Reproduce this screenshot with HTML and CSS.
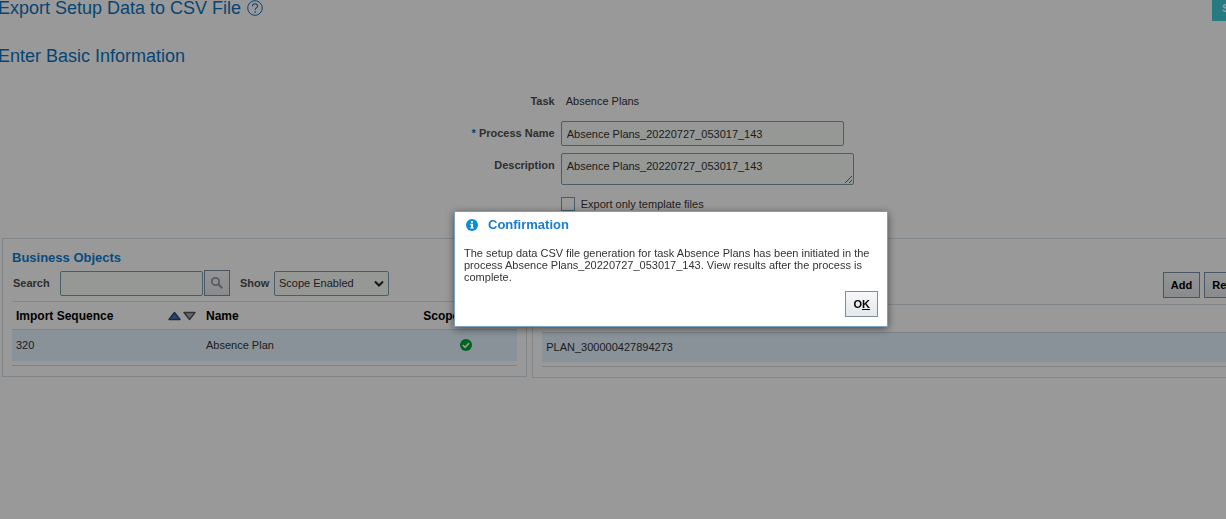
FILE: index.html
```
<!DOCTYPE html>
<html lang="en">
<head>
  <meta charset="UTF-8">
  <meta name="viewport" content="width=device-width, initial-scale=1.0">
  <title>Export Setup Data to CSV File</title>
  <link rel="stylesheet" href="styles.css">
</head>
<body>
  <div class="page">
    <div class="header">
      <h1>Export Setup Data to CSV File</h1>
      <a class="help" href="#" aria-label="Help">
        <svg width="16" height="16" viewBox="0 0 16 16" fill="none" stroke="currentColor">
          <circle cx="8" cy="8" r="7.3"/>
          <path d="M5.4 6.2C5.4 4.6 6.5 3.7 8 3.7s2.6.9 2.6 2.3c0 1.8-2.5 2-2.5 3.9" stroke-width="1.1"/>
          <path d="M8.1 11.3v1.4" stroke-width="1.3"/>
        </svg>
      </a>
      <button class="submit" type="button">Submit</button>
    </div>

    <h2>Enter Basic Information</h2>

    <form class="form">
      <span class="label">Task</span>
      <span class="value">Absence Plans</span>
      <label class="label" for="process"><span class="required">*</span> Process Name</label>
      <input class="field" id="process" type="text" value="Absence Plans_20220727_053017_143">
      <label class="label" for="description">Description</label>
      <textarea class="field" id="description">Absence Plans_20220727_053017_143</textarea>
      <div class="check">
        <input id="template" type="checkbox">
        <label for="template">Export only template files</label>
      </div>
    </form>

    <div class="panels">
      <div class="panel">
        <h3>Business Objects</h3>
        <div class="toolbar">
          <label for="search">Search</label>
          <input class="field search" id="search" type="text">
          <button class="btn icon-btn" type="button" aria-label="Search">
            <svg width="14" height="14" viewBox="0 0 14 14" fill="none" stroke="#999">
              <circle cx="5.5" cy="5.5" r="3.7" stroke-width="1.8"/>
              <path d="M8.3 8.3l4 4" stroke-width="2.2"/>
            </svg>
          </button>
          <label class="show" for="show">Show</label>
          <div class="select">
            <select class="field" id="show">
              <option>Scope Enabled</option>
            </select>
            <svg width="10" height="8" viewBox="0 0 10 8" fill="none" stroke="#222" stroke-width="2">
              <path d="M1 1.5l4 4 4-4"/>
            </svg>
          </div>
        </div>
        <table>
          <thead>
            <tr>
              <th class="col-seq">
                <div class="sortable">
                  Import Sequence
                  <svg width="28" height="10" viewBox="0 0 28 10" stroke-linejoin="round">
                    <path d="M1 8.5h11L6.5 1.5z" fill="#4a6fc4" stroke="#38435c" stroke-width="1.4"/>
                    <path d="M16 1.5h11l-5.5 7z" fill="#a4acb0" stroke="#555" stroke-width="1.4"/>
                  </svg>
                </div>
              </th>
              <th class="col-name">Name</th>
              <th class="col-scope">Scope Enabled</th>
            </tr>
          </thead>
          <tbody>
            <tr>
              <td>320</td>
              <td>Absence Plan</td>
              <td class="col-scope">
                <svg width="12" height="12" viewBox="0 0 12 12">
                  <circle cx="6" cy="6" r="6" fill="#00a830"/>
                  <path d="M2.8 6l2.3 2.3 4-4.2" fill="none" stroke="#fff" stroke-width="1.7"/>
                </svg>
              </td>
            </tr>
          </tbody>
        </table>
      </div>

      <div class="panel scope-panel">
        <div class="toolbar actions">
          <button class="btn" type="button">Add</button>
          <button class="btn" type="button">Remove</button>
        </div>
        <table>
          <thead>
            <tr><th></th></tr>
          </thead>
          <tbody>
            <tr><td>PLAN_300000427894273</td></tr>
          </tbody>
        </table>
      </div>
    </div>
  </div>

  <div class="overlay">
    <div class="dialog" role="dialog" aria-labelledby="dialog-title">
      <div class="dialog-title">
        <svg width="12" height="12" viewBox="0 0 12 12">
          <circle cx="6" cy="6" r="6" fill="#0a8fd6"/>
          <path d="M5 2h2v1.8H5zM4.3 4.8H7v3.6h.8v1.1H4.2V8.4H5V5.9h-.7z" fill="#fff"/>
        </svg>
        <h4 id="dialog-title">Confirmation</h4>
      </div>
      <p>The setup data CSV file generation for task Absence Plans has been initiated in the process Absence Plans_20220727_053017_143. View results after the process is complete.</p>
      <div class="dialog-footer">
        <button class="btn" type="button">O<u>K</u></button>
      </div>
    </div>
  </div>
</body>
</html>
```

FILE: styles.css
```
* {
  box-sizing: border-box;
}
body {
  margin: 0;
  min-height: 100vh;
  overflow: hidden;
  background-color: #fff;
  color: #333;
  font-family: "Liberation Sans", Arial, sans-serif;
  font-size: 11px;
}
h1, h2, h3, h4, p {
  margin: 0;
}
input, textarea, select, button {
  font-family: inherit;
  font-size: 11px;
  margin: 0;
}

/* the page is wider than the window and runs off both sides */
.page {
  margin: -5px -128px 0 -12px;
  padding-left: 10px;
}
.header {
  display: flex;
  align-items: center;
  gap: 6px;
  height: 26px;
  padding-right: 70px;
}
h1, h2 {
  color: #0b74bf;
  font-size: 18px;
  font-weight: normal;
  line-height: 24px;
}
h2 {
  margin-top: 23px;
}
.help {
  display: flex;
  color: #0b74bf;
}
.submit {
  height: 26px;
  width: 72px;
  margin-left: auto;
  padding: 0 10px;
  border: 0;
  background-color: #41cbd4;
  color: #fff;
  font-weight: bold;
  text-align: left;
}

.form {
  display: grid;
  grid-template-columns: 41.5% 1fr;
  gap: 7px 0;
  align-items: center;
  justify-items: start;
  margin-top: 21px;
}
.label {
  justify-self: end;
  align-self: start;
  padding-right: 6px;
  color: #4f4f4f;
  font-weight: bold;
  line-height: 25px;
}
.required {
  color: #0572ce;
}
.value {
  padding-left: 5px;
  line-height: 25px;
}
.field {
  height: 25px;
  padding: 0 5px;
  border: 1px solid #7a9eae;
  border-radius: 2px;
  background-color: #fafdfb;
  color: #333;
  outline: none;
}
#process {
  width: 283px;
}
#description {
  display: block;
  width: 293px;
  height: 32px;
  padding-top: 6px;
  overflow: hidden;
}
.check {
  grid-column: 2;
  display: flex;
  align-items: center;
  gap: 6px;
  height: 24px;
}
.check input {
  appearance: none;
  width: 14px;
  height: 14px;
  border: 1px solid #7a9eae;
}

.panels {
  display: grid;
  grid-template-columns: 39.2% 1fr;
  gap: 5px;
  align-items: start;
  margin: 22px 12px 0 4px;
}
.panel {
  padding: 10px 9px;
  border: 1px solid #d6dfe6;
}
h3 {
  color: #0c7fd4;
  font-size: 13px;
  line-height: 18px;
}
.toolbar {
  display: flex;
  align-items: center;
  height: 26px;
  margin: 3px 0 5px;
}
.toolbar label {
  width: 48px;
  padding-left: 1px;
  color: #4f4f4f;
  font-weight: bold;
}
.toolbar .show {
  width: 44px;
  padding-left: 10px;
}
.search {
  width: 143px;
}
.btn {
  height: 26px;
  padding: 0 7px;
  border: 1px solid #7a8fa3;
  background: linear-gradient(#f6f8f9, #e4e8ea);
  color: #000;
  font-weight: bold;
}
.icon-btn {
  display: flex;
  align-items: center;
  justify-content: center;
  width: 26px;
  margin-left: 1px;
  padding: 0;
}
.select {
  position: relative;
}
.select select {
  appearance: none;
  width: 115px;
  padding: 0 4px;
}
.select svg {
  position: absolute;
  top: 9px;
  right: 5px;
  pointer-events: none;
}

table {
  width: 100%;
  border-collapse: collapse;
  border-top: 1px solid #d6dfe6;
}
th, td {
  padding: 0 4px;
  text-align: left;
}
th {
  height: 28px;
  color: #000;
  font-size: 12px;
}
td {
  height: 31px;
  border-top: 1px solid #d0dce4;
  background-color: #e4f3ff;
}
.panel table {
  margin-bottom: 4px;
}
.panel::after {
  content: "";
  display: block;
  border-top: 1px solid #d6d9dc;
}
.sortable {
  display: flex;
  align-items: center;
  justify-content: space-between;
  padding-right: 2px;
}
.col-seq {
  width: 190px;
}
.col-scope {
  width: 102px;
  text-align: center;
}
.col-scope svg {
  display: block;
  margin: 0 auto;
}
.scope-panel .toolbar {
  margin: 23px 0 6px;
}
.scope-panel td {
  height: 29px;
}
.actions {
  justify-content: flex-end;
  gap: 4px;
  padding-right: 69px;
}

.overlay {
  position: fixed;
  top: 0;
  bottom: 0;
  left: -12px;
  right: -128px;
  display: flex;
  justify-content: center;
  align-items: flex-start;
  padding-top: 211px;
  background-color: rgba(0, 0, 0, 0.4);
}
.dialog {
  width: 434px;
  padding: 4px 9px 9px;
  border: 1px solid #7aa0bd;
  background-color: #fff;
  box-shadow: 0 2px 8px rgba(0, 0, 0, 0.5);
}
.dialog-title {
  display: flex;
  align-items: center;
  gap: 10px;
  padding-left: 2px;
}
h4 {
  color: #1a7ccf;
  font-size: 13px;
  line-height: 18px;
}
.dialog p {
  margin-top: 13px;
  line-height: 12px;
}
.dialog-footer {
  display: flex;
  justify-content: flex-end;
  margin-top: 8px;
}
```
